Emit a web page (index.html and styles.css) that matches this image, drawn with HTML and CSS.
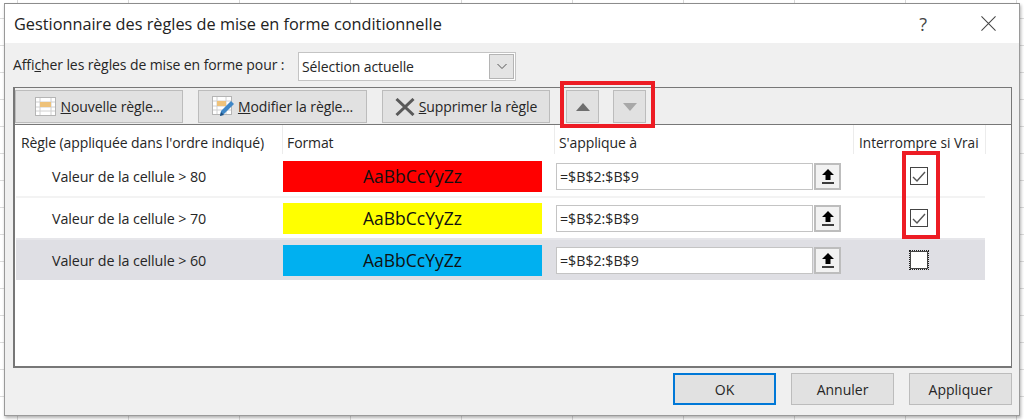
FILE: index.html
```html
<!DOCTYPE html>
<html lang="fr">
<head>
<meta charset="utf-8">
<title>Gestionnaire des règles</title>
<link rel="stylesheet" href="styles.css">
</head>
<body>
<div class="dialog">
  <header class="titlebar">
    <span class="title">Gestionnaire des règles de mise en forme conditionnelle</span>
    <span class="help">?</span>
    <svg class="close" width="16" height="16" viewBox="0 0 16 16"><path d="M.5.5l15 15M15.5.5l-15 15" stroke="#444" stroke-width="1.1" fill="none"/></svg>
  </header>
  <div class="body">
    <div class="scope">
      <span class="scope-label">Affi<u>c</u>her les règles de mise en forme pour :</span>
      <div class="select">
        <span class="select-value">Sélection actuelle</span>
        <span class="select-arrow"><svg width="12" height="7" viewBox="0 0 12 7"><path d="M1.5 1l4.5 4.5L10.500 1" stroke="#555" fill="none"/></svg></span>
      </div>
    </div>
    <div class="panel">
      <div class="toolbar">
        <button class="btn tool tool-new">
          <svg width="21" height="19" viewBox="0 0 21 19"><rect x=".5" y=".5" width="20" height="18" fill="#fff" stroke="#b5b5b5"/><path d="M5 1v17M16 1v17M1 5h19M1 10h19M1 14h19" stroke="#d0d0d0" fill="none"/><rect x="5" y="5" width="11" height="5" fill="#eec27a"/></svg>
          <span><u>N</u>ouvelle règle...</span>
        </button>
        <button class="btn tool tool-edit">
          <svg width="23" height="22" viewBox="0 0 23 22"><rect x=".5" y=".5" width="19" height="18" fill="#fff" stroke="#b5b5b5"/><path d="M5 1v17M14 1v17M1 5h18M1 10h18M1 14h18" stroke="#d0d0d0" fill="none"/><rect x="5" y="5" width="9" height="5" fill="#eec27a"/><path d="M8 20l1-5L19 5l3 3-10 10z" fill="#3f87c7"/><path d="M8 20l1-4 3 3z" fill="#1d4f80"/></svg>
          <span><u>M</u>odifier la règle...</span>
        </button>
        <button class="btn tool tool-del">
          <svg width="20" height="18" viewBox="0 0 20 18"><path d="M1.500 1l17 16M18.500 1l-17 16" stroke="#595959" stroke-width="3" fill="none"/></svg>
          <span><u>S</u>upprimer la règle</span>
        </button>
        <button class="btn arrow arrow-up"><svg width="14" height="8" viewBox="0 0 14 8"><path d="M7 0l7 8H0z" fill="#6e6e6e"/></svg></button>
        <button class="btn arrow arrow-down"><svg width="14" height="8" viewBox="0 0 14 8"><path d="M0 0h14L7 8z" fill="#a8a8a8"/></svg></button>
      </div>
      <div class="table">
        <div class="thead">
          <span class="th th-rule">Règle (appliquée dans l'ordre indiqué)</span>
          <span class="th th-format">Format</span>
          <span class="th th-range">S'applique à</span>
          <span class="th th-stop">Interrompre si Vrai</span>
        </div>
        <div class="row">
          <span class="rule">Valeur de la cellule &gt; 80</span>
          <span class="swatch swatch-red">AaBbCcYyZz</span>
          <div class="range"><span class="range-input">=$B$2:$B$9</span><span class="range-btn"><svg width="12" height="15" viewBox="0 0 12 15"><path d="M6 0l6 6H8.500v5h-5V6H0z" fill="#000"/><path d="M0 14h12" stroke="#000" stroke-width="1.500"/></svg></span></div>
          <span class="stop"><span class="check"><svg width="14" height="11" viewBox="0 0 14 11"><path d="M1 6l4 4 8-9" stroke="#555" stroke-width="1.400" fill="none"/></svg></span></span>
        </div>
        <div class="row">
          <span class="rule">Valeur de la cellule &gt; 70</span>
          <span class="swatch swatch-yellow">AaBbCcYyZz</span>
          <div class="range"><span class="range-input">=$B$2:$B$9</span><span class="range-btn"><svg width="12" height="15" viewBox="0 0 12 15"><path d="M6 0l6 6H8.500v5h-5V6H0z" fill="#000"/><path d="M0 14h12" stroke="#000" stroke-width="1.500"/></svg></span></div>
          <span class="stop"><span class="check"><svg width="14" height="11" viewBox="0 0 14 11"><path d="M1 6l4 4 8-9" stroke="#555" stroke-width="1.400" fill="none"/></svg></span></span>
        </div>
        <div class="row row-selected">
          <span class="rule">Valeur de la cellule &gt; 60</span>
          <span class="swatch swatch-blue">AaBbCcYyZz</span>
          <div class="range"><span class="range-input">=$B$2:$B$9</span><span class="range-btn"><svg width="12" height="15" viewBox="0 0 12 15"><path d="M6 0l6 6H8.500v5h-5V6H0z" fill="#000"/><path d="M0 14h12" stroke="#000" stroke-width="1.500"/></svg></span></div>
          <span class="stop"><span class="check check-focus"></span></span>
        </div>
      </div>
    </div>
    <div class="actions">
      <button class="btn action action-ok">OK</button>
      <button class="btn action">Annuler</button>
      <button class="btn action">Appliquer</button>
    </div>
  </div>
  <div class="mark mark-arrows"></div>
  <div class="mark mark-checks"></div>
</div>
</body>
</html>
```
FILE: styles.css
```css
* { box-sizing: border-box; }
html, body { margin: 0; height: 420px; overflow: hidden; }
body {
  padding: 3px 4px 0;
  background-color: #fff;
  background-image:
    repeating-linear-gradient(90deg, transparent 0 17px, #d8d8d8 17px 18px, transparent 18px 111px),
    repeating-linear-gradient(180deg, transparent 0 18px, #dcdcdc 18px 19px, transparent 19px 27px);
  font-family: "Open Sans", "Noto Sans", sans-serif;
  color: #262626;
}
.dialog {
  position: relative;
  width: 1016px;
  height: 413px;
  background: #f0f0f0;
  border: 1px solid #9a9a9a;
  border-top-color: #8c8c8c;
  box-shadow: 1px 2px 3px rgba(0,0,0,.3);
  display: flex;
  flex-direction: column;
}
.titlebar {
  height: 39px;
  flex: none;
  background: #fff;
  display: flex;
  align-items: center;
  padding: 0 0 0 9px;
}
.title { font-size: 16.300px; flex: 1; color: #222; }
.help { font-size: 18px; color: #444; margin-right: 54px; }
.close { margin-right: 23px; width: 15px; height: 15px; }
.body { flex: 1; display: flex; flex-direction: column; padding: 0 7px 0 8px; }
.scope { height: 44px; display: flex; align-items: center; padding-top: 3px; }
.scope-label { font-size: 14px; width: 285px; white-space: nowrap; letter-spacing: -.1px; padding-bottom: 5px; }
.select {
  width: 218px; height: 29px;
  background: #fff;
  border: 1px solid #c4c4c4;
  display: flex; align-items: center;
  font-size: 14px;
}
.select-value { flex: 1; padding-left: 3px; letter-spacing: -.1px; }
.select-arrow {
  width: 25px; height: 25px; margin-right: 1px;
  background: #e4e4e4; border: 1px solid #b4b4b4;
  display: flex; align-items: center; justify-content: center;
}
.panel {
  width: 999px; height: 281px;
  border: 1px solid #777;
  border-bottom-width: 2px;
  border-left-width: 2px;
  display: flex; flex-direction: column;
}
.toolbar { height: 37px; flex: none; display: flex; align-items: flex-start; padding-top: 2px; background: #efefef; border-bottom: 1px solid #777; }
.btn {
  background: #e1e1e1;
  border: 1px solid #bcbcbc;
  font: inherit; color: inherit;
  padding: 0;
  display: flex; align-items: center; justify-content: center;
}
.tool { height: 33px; font-size: 14px; gap: 5px; letter-spacing: -.1px; }
.tool-new { width: 168px; margin-right: 15px; }
.tool-edit { width: 169px; margin-right: 15px; gap: 3px; }
.tool-del { width: 168px; margin-right: 16px; gap: 4px; }
.arrow { width: 33px; height: 33px; }
.arrow-up { margin-right: 14px; }
.table { flex: 1; background: #fff; padding-left: 1px; font-size: 14px; }
.thead { height: 29px; display: grid; grid-template-columns: 267px 272px 299px 132px; }
.th { display: flex; align-items: center; padding-top: 5px; border-right: 1px solid #ececec; letter-spacing: -.1px; white-space: nowrap; }
.th-rule { padding-left: 5px; }
.th-format, .th-range { padding-left: 4px; }
.th-stop { padding-left: 5px; font-size: 13.600px; letter-spacing: 0; }
.row {
  width: 969px; height: 42px;
  display: grid; grid-template-columns: 267px 273px 299px 130px;
  align-items: center;
  border-top: 2px solid #f3f3f3;
}
.thead + .row { border-top-color: #fff; }
.row-selected { background: #dfdfe4; border-top-color: #e6e6ea; }
.rule { padding-left: 36px; font-size: 14.300px; letter-spacing: -.1px; }
.swatch {
  width: 259px; height: 31px;
  display: flex; align-items: center; justify-content: center;
  font-size: 17.500px; color: #111;
}
.swatch-red { background: #f00; }
.swatch-yellow { background: #ff0; }
.swatch-blue { background: #00b0f0; }
.range { display: flex; align-items: center; }
.range-input {
  width: 257px; height: 27px;
  background: #fff; border: 1px solid #c4c4c4;
  display: flex; align-items: center; padding-left: 3px;
  font-size: 14.200px;
}
.range-btn {
  width: 27px; height: 27px; margin-left: 1px;
  background: #f2f2f2; border: 2px solid #bdbdbd;
  display: flex; align-items: center; justify-content: center;
}
.stop { display: flex; justify-content: center; padding-right: 2px; }
.check {
  width: 18px; height: 18px;
  background: #fff; border: 1px solid #444;
  display: flex; align-items: center; justify-content: center;
}
.check-focus { outline: 1px dotted #222; }
.actions { flex: 1; display: flex; justify-content: flex-end; align-items: flex-start; gap: 15px; padding: 5px 0 0; }
.action { width: 103px; height: 32px; font-size: 14px; }
.action-ok { border: 2px solid #0078d7; }
.mark { position: absolute; border: 4px solid #ed1c24; pointer-events: none; }
.mark-arrows { left: 555px; top: 77px; width: 95px; height: 47px; }
.mark-checks { left: 897px; top: 147px; width: 38px; height: 88px; }
```
